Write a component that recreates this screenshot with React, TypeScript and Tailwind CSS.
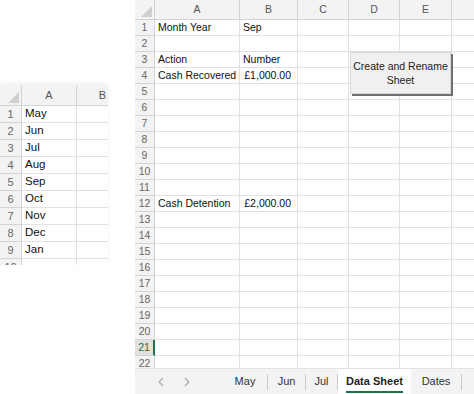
import React from "react";

const font = "font-['Liberation_Sans',Arial,sans-serif]";

const leftMonths = ["May", "Jun", "Jul", "Aug", "Sep", "Oct", "Nov", "Dec", "Jan", ""];

const rightCols = [
  { key: "A", w: "w-[85px]" },
  { key: "B", w: "w-[58px]" },
  { key: "C", w: "w-[51px]" },
  { key: "D", w: "w-[51px]" },
  { key: "E", w: "w-[52px]" },
  { key: "", w: "w-[52px]" },
];

type CellData = { text: string; right?: boolean };

const sheetData: Record<number, Record<string, CellData>> = {
  1: { A: { text: "Month Year" }, B: { text: "Sep" } },
  3: { A: { text: "Action" }, B: { text: "Number" } },
  4: { A: { text: "Cash Recovered" }, B: { text: "£1,000.00", right: true } },
  12: { A: { text: "Cash Detention" }, B: { text: "£2,000.00", right: true } },
};

function Corner({ size }: { size: string }) {
  return (
    <div className={`relative ${size} shrink-0 bg-[#f3f3f3] border-r border-b border-[#d4d4d4]`}>
      <svg className="absolute right-[2px] bottom-[2px]" width="11" height="11" viewBox="0 0 11 11">
        <polygon points="11,0 11,11 0,11" fill="#cfcfcf" />
      </svg>
    </div>
  );
}

function LeftSheet() {
  return (
    <div className={`mt-[85px] w-[108px] h-[180px] overflow-hidden shrink-0 bg-white shadow-[0_-2px_4px_rgba(0,0,0,0.06)] ${font}`}>
      <div className="flex h-[21px] w-[140px]">
        <Corner size="w-[22px] h-[21px]" />
        <div className="w-[55px] shrink-0 flex items-center justify-center bg-[#f3f3f3] border-r border-b border-[#d4d4d4] text-[11px] text-[#555]">A</div>
        <div className="w-[52px] shrink-0 flex items-center justify-center bg-[#f3f3f3] border-r border-b border-[#d4d4d4] text-[11px] text-[#555]">B</div>
      </div>
      {leftMonths.map((m, i) => (
        <div key={i} className="flex h-[17px] w-[140px]">
          <div className="w-[22px] shrink-0 flex items-center justify-center bg-[#f3f3f3] border-r border-b border-[#d4d4d4] text-[11px] text-[#666]">
            {i + 1}
          </div>
          <div className="w-[55px] shrink-0 flex items-center pl-[3px] border-r border-b border-[#e1e1e1] text-[11.5px] text-[#111]">
            {m}
          </div>
          <div className="w-[52px] shrink-0 border-r border-b border-[#e1e1e1]" />
        </div>
      ))}
    </div>
  );
}

function Chevron({ dir }: { dir: "left" | "right" }) {
  return (
    <svg width="6" height="10" viewBox="0 0 6 10" fill="none">
      <path
        d={dir === "left" ? "M5 1 L1 5 L5 9" : "M1 1 L5 5 L1 9"}
        stroke="#a8a8a8"
        strokeWidth="1.1"
      />
    </svg>
  );
}

function Sep() {
  return <div className="w-px h-[16px] bg-[#c9c9c9] shrink-0" />;
}

function TabBar() {
  return (
    <div className="h-[26px] flex items-center bg-[#f3f3f3] border-t border-[#e2e2e2] text-[11px] text-[#333]">
      <div className="w-[88px] h-full flex items-center pl-[23px] gap-[20px] shrink-0">
        <Chevron dir="left" />
        <Chevron dir="right" />
      </div>
      <div className="w-[44px] h-full flex items-center justify-center shrink-0">May</div>
      <Sep />
      <div className="w-[37px] h-full flex items-center justify-center shrink-0">Jun</div>
      <Sep />
      <div className="w-[31px] h-full flex items-center justify-center shrink-0">Jul</div>
      <Sep />
      <div className="w-[73px] h-full flex items-center justify-center shrink-0 bg-white">
        <span className="relative font-semibold text-[#1f1f1f]">
          Data Sheet
          <span className="absolute left-0 right-0 -bottom-[3px] h-[2px] bg-[#217346]" />
        </span>
      </div>
      <div className="w-[50px] h-full flex items-center justify-center shrink-0">Dates</div>
      <Sep />
    </div>
  );
}

function RightSheet() {
  const rows = Array.from({ length: 22 }, (_, i) => i + 1);
  return (
    <div className={`relative ml-[27px] w-[339px] h-[394px] overflow-hidden flex flex-col bg-white ${font}`}>
      <div className="h-[368px] overflow-hidden">
        <div className="flex h-[20px] w-[400px]">
          <Corner size="w-[20px] h-[20px]" />
          {rightCols.map((c, i) => (
            <div
              key={i}
              className={`${c.w} shrink-0 flex items-center justify-center bg-[#f3f3f3] border-r border-b border-[#d4d4d4] text-[10.5px] text-[#555]`}
            >
              {c.key}
            </div>
          ))}
        </div>
        {rows.map((r) => (
          <div key={r} className="flex h-[16px] w-[400px]">
            <div
              className={
                r === 21
                  ? "w-[20px] shrink-0 flex items-center justify-center bg-[#e1e1e1] border-r-2 border-b border-r-[#217346] border-b-[#d4d4d4] text-[10.5px] text-[#217346]"
                  : "w-[20px] shrink-0 flex items-center justify-center bg-[#f3f3f3] border-r border-b border-[#d4d4d4] text-[10.5px] text-[#666]"
              }
            >
              {r}
            </div>
            {rightCols.map((c, i) => {
              const cell = c.key ? sheetData[r]?.[c.key] : undefined;
              return (
                <div
                  key={i}
                  className={`${c.w} shrink-0 flex items-center whitespace-nowrap border-r border-b border-[#e1e1e1] text-[10.5px] text-[#111] ${
                    cell?.right ? "justify-end pr-[6px]" : "pl-[3px]"
                  }`}
                >
                  {cell?.text}
                </div>
              );
            })}
          </div>
        ))}
      </div>
      <TabBar />

      {/* macro button sitting over D3:E5 */}
      <button className="absolute left-[215px] top-[52px] w-[101px] h-[42px] bg-[#f0f0f0] border border-[#d8d8d8] shadow-[2px_2px_0_#707070] text-[10.5px] leading-[14px] text-[#222] flex flex-col items-center justify-center">
        <span>Create and Rename</span>
        <span>Sheet</span>
      </button>
    </div>
  );
}

export default function App() {
  return (
    <div className="w-[474px] h-[394px] bg-white flex items-start overflow-hidden">
      <LeftSheet />
      <RightSheet />
    </div>
  );
}
